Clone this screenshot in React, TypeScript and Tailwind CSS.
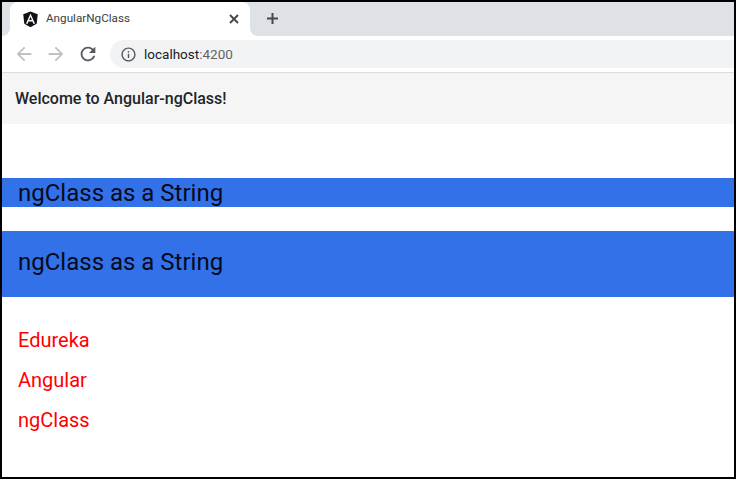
const icon = {
  back: "M20 11H7.83l5.59-5.59L12 4l-8 8 8 8 1.41-1.41L7.83 13H20v-2z",
  forward: "M12 4l-1.41 1.41L16.17 11H4v2h12.17l-5.58 5.59L12 20l8-8z",
  reload: "M17.65 6.35C16.2 4.9 14.21 4 12 4c-4.42 0-7.99 3.58-7.99 8s3.57 8 7.99 8c3.73 0 6.84-2.55 7.73-6h-2.08c-.82 2.33-3.04 4-5.65 4-3.31 0-6-2.69-6-6s2.69-6 6-6c1.66 0 3.14.69 4.22 1.78L13 11h7V4l-2.35 2.35z",
  info: "M11 7h2v2h-2zm0 4h2v6h-2zm1-9C6.48 2 2 6.48 2 12s4.48 10 10 10 10-4.48 10-10S17.52 2 12 2zm0 18c-4.41 0-8-3.59-8-8s3.59-8 8-8 8 3.59 8 8-3.59 8-8 8z",
};

function Glyph({ d, size, className }: { d: string; size: number; className: string }) {
  return (
    <svg width={size} height={size} viewBox="0 0 24 24" fill="currentColor" className={`shrink-0 ${className}`}>
      <path d={d} />
    </svg>
  );
}

export default function App() {
  return (
    <div className="w-[736px] h-[479px] border-2 border-black bg-white overflow-hidden font-['Roboto',sans-serif] flex flex-col">
      <div className="h-[34px] bg-[#dee1e6] flex items-end pl-2 shrink-0">
        <div className="relative w-[240px] h-[34px] bg-white rounded-t-lg flex items-center pl-[12px] pr-[11px]">
          <div className="absolute left-[-8px] bottom-0 w-2 h-2 bg-white">
            <div className="w-full h-full bg-[#dee1e6] rounded-br-lg" />
          </div>
          <div className="absolute right-[-8px] bottom-0 w-2 h-2 bg-white">
            <div className="w-full h-full bg-[#dee1e6] rounded-bl-lg" />
          </div>
          <svg width="17" height="17" viewBox="0 0 250 250" className="shrink-0">
            <path fill="#111" d="M125 8 18 46l16 142 91 52 91-52 16-142z" />
            <path fill="#fff" d="M125 36 58 186h25l13-33h58l13 33h25zm20 97h-40l20-48z" />
          </svg>
          <span className="ml-[7px] text-[11.7px] text-[#3c4043]">AngularNgClass</span>
          <svg width="10" height="10" viewBox="0 0 10 10" className="ml-auto shrink-0 text-[#44474b]" stroke="currentColor" strokeWidth="1.9">
            <path d="M1 1l8 8M9 1l-8 8" />
          </svg>
        </div>
        <svg width="11" height="11" viewBox="0 0 11 11" className="ml-[17px] mb-[12px] shrink-0 text-[#44474b]" fill="currentColor">
          <path d="M4.5 0h2v4.5H11v2H6.500V11h-2V6.500H0v-2h4.500z" />
        </svg>
      </div>
      <div className="h-[36px] flex items-center shrink-0 pl-[11px]">
        <Glyph d={icon.back} size={22} className="text-[#bfc1c4]" />
        <Glyph d={icon.forward} size={22} className="ml-[10px] text-[#bfc1c4]" />
        <Glyph d={icon.reload} size={22} className="ml-[10px] text-[#56595d]" />
        <div className="ml-[11px] flex-1 h-[28px] bg-[#f1f3f4] rounded-l-full flex items-center pl-[10px]">
          <Glyph d={icon.info} size={17} className="text-[#56595d]" />
          <span className="ml-[7px] text-[13.5px] text-[#202124]">
            localhost<span className="text-[#5f6368]">:4200</span>
          </span>
        </div>
      </div>
      <div className="h-px bg-[#dadce0] shrink-0" />
      <div className="h-[51px] bg-[#f5f5f5] flex items-center pl-[13px] text-base font-medium text-[#212529] shrink-0">
        Welcome to Angular-ngClass!
      </div>
      <div className="mt-[54px] h-[29px] bg-[#3371e9] pl-4 text-2xl leading-[31px] text-[#050a1c]">ngClass as a String</div>
      <div className="mt-6 h-[66px] bg-[#3371e9] pl-4 pb-1 flex items-center text-2xl text-[#050a1c]">ngClass as a String</div>
      <div className="mt-[23px] pl-4 flex flex-col text-xl text-[#ff0000]">
        <div className="h-10 flex items-center">Edureka</div>
        <div className="h-10 flex items-center">Angular</div>
        <div className="h-10 flex items-center">ngClass</div>
      </div>
    </div>
  );
}
